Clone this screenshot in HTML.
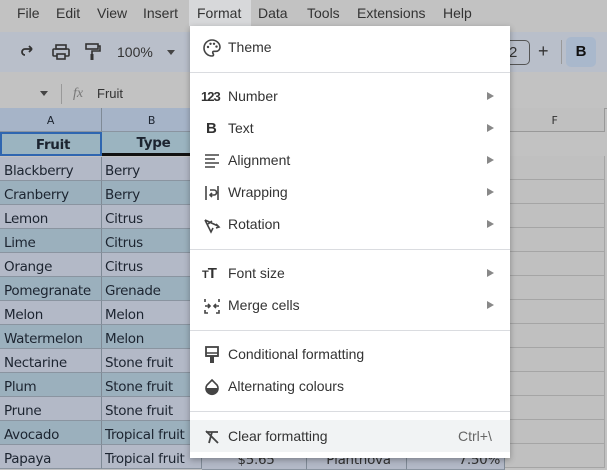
<!DOCTYPE html>
<html><head><style>
*{margin:0;padding:0;box-sizing:border-box}
body{width:607px;height:470px;overflow:hidden;background:#c2c2c2;font-family:"Liberation Sans",Arial,sans-serif;position:relative;color:#222}
.a{position:absolute}
.mb span{position:absolute;top:5px;font-size:14px;color:#333}
.cell{position:absolute;height:24px;border-right:1px solid #7f8a96;border-bottom:1px solid #8a94a0;font-size:13.5px;padding:6px 0 0 4px;font-family:"DejaVu Sans","Liberation Sans",sans-serif;letter-spacing:-0.3px;color:#1c2430;overflow:hidden;white-space:nowrap}
.menu{position:absolute;left:190px;top:26px;width:320px;height:432px;background:#fff;box-shadow:0 2px 6px rgba(0,0,0,.3)}
.it{position:absolute;left:0;width:320px;height:32px;font-size:14px;color:#333}
.it .t{position:absolute;left:38px;top:8px}
.it .ar{position:absolute;left:297px;top:12px;width:0;height:0;border-left:7px solid #888;border-top:4px solid transparent;border-bottom:4px solid transparent}
.it svg{position:absolute;left:12px;top:7px}
.sep{position:absolute;left:0;width:320px;height:1px;background:#dadce0}
</style></head><body>
<div class="mb">
<span style="left:17px">File</span><span style="left:56px">Edit</span><span style="left:97px">View</span><span style="left:143px">Insert</span>
<span style="left:258px">Data</span><span style="left:307px">Tools</span><span style="left:357px">Extensions</span><span style="left:443px">Help</span>
</div>
<div class="a" style="left:189px;top:0;width:62px;height:26px;background:#d7d8da"></div>
<span class="a" style="left:197px;top:5px;font-size:14px;color:#333">Format</span>
<div class="a" style="left:0;top:32px;width:607px;height:40px;background:#b9bfca"></div>
<svg class="a" style="left:20px;top:44px" width="16" height="16"><path d="M12 5H5a3 3 0 0 0 0 6h0M12 5l-3-3M12 5l-3 3M4 13h0" stroke="#333" stroke-width="1.8" fill="none"/></svg>
<svg class="a" style="left:52px;top:43px" width="18" height="18"><rect x="4" y="2" width="10" height="4" fill="none" stroke="#333" stroke-width="1.6"/><rect x="1" y="6" width="16" height="7" rx="1" fill="none" stroke="#333" stroke-width="1.6"/><rect x="5" y="11" width="8" height="5" fill="#b9bfca" stroke="#333" stroke-width="1.6"/></svg>
<svg class="a" style="left:85px;top:43px" width="16" height="18"><rect x="1" y="1" width="12" height="5" fill="none" stroke="#333" stroke-width="1.6"/><path d="M13 3h2v5H7v3" stroke="#333" stroke-width="1.6" fill="none"/><rect x="5.5" y="11" width="3" height="6" fill="#333"/></svg>
<span class="a" style="left:117px;top:44px;font-size:14px;color:#333">100%</span>
<div class="a" style="left:167px;top:50px;border-top:5px solid #444;border-left:4px solid transparent;border-right:4px solid transparent"></div>
<div class="a" style="left:503px;top:40px;width:27px;height:25px;border:1px solid #555;border-left:none;border-radius:0 5px 5px 0;font-size:15px;padding:3px 0 0 6px;color:#333">2</div>
<span class="a" style="left:538px;top:41px;font-size:18px;color:#333">+</span>
<div class="a" style="left:561px;top:40px;width:1px;height:24px;background:#999"></div>
<div class="a" style="left:566px;top:37px;width:30px;height:30px;border-radius:5px;background:#a9b8cc;font-weight:bold;font-size:15px;text-align:center;line-height:30px;color:#111">B</div>
<div class="a" style="left:40px;top:91px;border-top:5px solid #444;border-left:4px solid transparent;border-right:4px solid transparent"></div>
<div class="a" style="left:61px;top:84px;width:1px;height:20px;background:#999"></div>
<span class="a" style="left:73px;top:86px;font-size:14px;font-style:italic;font-family:'Liberation Serif',serif;color:#777">fx</span>
<span class="a" style="left:97px;top:86px;font-size:13px;color:#333">Fruit</span>
<div class="a" style="left:0;top:108px;width:607px;height:1px;background:#999"></div>
<div class="cell" style="left:0;top:108px;width:102px;background:#a6b4c8;text-align:center;padding-left:0;font-size:11px;padding-top:6px">A</div>
<div class="cell" style="left:102px;top:108px;width:100px;background:#a6b4c8;text-align:center;padding-left:0;font-size:11px;padding-top:6px">B</div>
<div class="cell" style="left:505px;top:108px;width:100px;background:#c0c0c0;text-align:center;padding-left:0;font-size:11px;padding-top:6px;color:#333;border-color:#999">F</div>
<div class="cell" style="left:0;top:132px;width:102px;background:#9bb4c0;text-align:center;font-weight:bold;border:2px solid #2f66b0;padding-top:3px">Fruit</div>
<div class="cell" style="left:102px;top:132px;width:100px;background:#9bb4c0;text-align:center;font-weight:bold;border-bottom:3px solid #111;padding-top:3px">Type</div>
<script>
var d=[["Blackberry","Berry"],["Cranberry","Berry"],["Lemon","Citrus"],["Lime","Citrus"],["Orange","Citrus"],["Pomegranate","Grenade"],["Melon","Melon"],["Watermelon","Melon"],["Nectarine","Stone fruit"],["Plum","Stone fruit"],["Prune","Stone fruit"],["Avocado","Tropical fruit"],["Papaya","Tropical fruit"]];
var h="";
for(var i=0;i<d.length;i++){var y=157+i*24;var bg=i%2?"#9bb0bd":"#b3b9c7";
h+='<div class="cell" style="left:0;top:'+y+'px;width:102px;background:'+bg+'">'+d[i][0]+'</div>';
h+='<div class="cell" style="left:102px;top:'+y+'px;width:100px;background:'+bg+';padding-left:3px">'+d[i][1]+'</div>';
h+='<div class="cell" style="left:505px;top:'+(y-1)+'px;width:100px;background:#c0c0c0;border-color:#a5a5a5"></div>';}
document.write(h);
</script>
<div class="cell" style="left:202px;top:446px;width:105px;background:#b3b9c7;text-align:center;color:#333">$5.65</div>
<div class="cell" style="left:307px;top:446px;width:100px;background:#b3b9c7;text-align:center;color:#333">Plantnova</div>
<div class="cell" style="left:407px;top:446px;width:98px;background:#b3b9c7;text-align:right;padding-right:4px;color:#333">7.50%</div>
<div class="menu">
<div class="it" style="top:5px"><svg width="20" height="20" viewBox="0 0 20 20"><path d="M10 2a8 8 0 0 0 0 16c1 0 1.5-.7 1.5-1.4 0-.9-.8-1.1-.8-2 0-.8.6-1.3 1.4-1.3H14a4 4 0 0 0 4-4C18 5.4 14.4 2 10 2z" fill="none" stroke="#444" stroke-width="1.6"/><circle cx="6" cy="9" r="1.2" fill="#444"/><circle cx="8.5" cy="5.8" r="1.2" fill="#444"/><circle cx="12" cy="5.8" r="1.2" fill="#444"/><circle cx="14.5" cy="8.6" r="1.2" fill="#444"/></svg><span class="t">Theme</span></div>
<div class="sep" style="top:46px"></div>
<div class="it" style="top:54px"><span class="a" style="left:11px;top:9px;font-size:13px;font-weight:bold;color:#333;letter-spacing:-1px">123</span><span class="t">Number</span><i class="ar"></i></div>
<div class="it" style="top:86px"><span class="a" style="left:16px;top:8px;font-size:15px;font-weight:bold;color:#333">B</span><span class="t">Text</span><i class="ar"></i></div>
<div class="it" style="top:118px"><svg width="20" height="20"><path d="M3 4h14M3 8h10M3 12h14M3 16h10" stroke="#444" stroke-width="1.6"/></svg><span class="t">Alignment</span><i class="ar"></i></div>
<div class="it" style="top:150px"><svg width="20" height="20"><path d="M4 3v14M16 3v14M8 7h4a2 2 0 0 1 0 5H8M10 10l-2 2 2 2" stroke="#444" stroke-width="1.6" fill="none"/></svg><span class="t">Wrapping</span><i class="ar"></i></div>
<div class="it" style="top:182px"><svg width="20" height="20"><path d="M3 5l6 12 2-4M3 5l13 6M6 9l4-3M14 9l3 3-3 1" stroke="#444" stroke-width="1.6" fill="none"/></svg><span class="t">Rotation</span><i class="ar"></i></div>
<div class="sep" style="top:223px"></div>
<div class="it" style="top:231px"><span class="a" style="left:12px;top:8px;font-size:15px;font-weight:bold;color:#333;letter-spacing:-1px"><small style="font-size:11px">T</small>T</span><span class="t">Font size</span><i class="ar"></i></div>
<div class="it" style="top:263px"><svg width="20" height="20"><path d="M3 3v3M3 14v3h3M17 3v3M17 14v3h-3M3 10h5M6 8l2 2-2 2M17 10h-5M14 8l-2 2 2 2" stroke="#444" stroke-width="1.6" fill="none"/></svg><span class="t">Merge cells</span><i class="ar"></i></div>
<div class="sep" style="top:304px"></div>
<div class="it" style="top:312px"><svg width="20" height="20"><rect x="4" y="2" width="12" height="9" fill="none" stroke="#444" stroke-width="1.8"/><path d="M4 8h12M4 11h12" stroke="#444" stroke-width="1.6"/><rect x="8" y="11" width="4" height="7" fill="#444"/></svg><span class="t">Conditional formatting</span></div>
<div class="it" style="top:344px"><svg width="20" height="20"><path d="M10 3l5 5a6 6 0 1 1-10 0z" fill="none" stroke="#444" stroke-width="1.6"/><path d="M4 11h12a6 6 0 0 1-12 0z" fill="#444"/></svg><span class="t">Alternating colours</span></div>
<div class="sep" style="top:385px"></div>
<div class="it" style="top:394px;background:#f1f3f4"><svg width="20" height="20"><path d="M4 5h12M10 5l-3 11M4 4l12 12" stroke="#444" stroke-width="1.8" fill="none"/></svg><span class="t">Clear formatting</span><span class="a" style="left:268px;top:8px;color:#666">Ctrl+\</span></div>
</div>
</body></html>
